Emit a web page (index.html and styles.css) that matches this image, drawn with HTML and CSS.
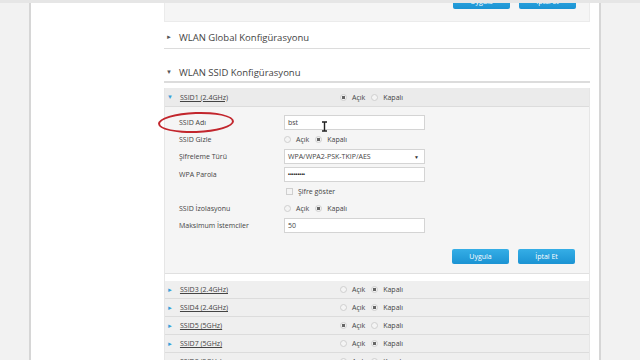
FILE: index.html
```html
<!DOCTYPE html>
<html lang="tr">
<head>
    <meta charset="UTF-8">
    <meta name="viewport" content="width=device-width, initial-scale=1.0">
    <title>WLAN Konfigürasyonu</title>
    <link rel="stylesheet" href="styles.css">
</head>
<body>
    <div class="page">
        <div class="content">
            <div class="top-box">
                <button class="btn">Uygula</button>
                <button class="btn">İptal Et</button>
            </div>

            <div class="section">
                <span class="arrow">&#9658;</span> WLAN Global Konfigürasyonu
            </div>
            <div class="section open">
                <span class="arrow">&#9660;</span> WLAN SSID Konfigürasyonu
            </div>

            <div class="ssid-panel">
                <div class="ssid-row head">
                    <span class="arrow blue">&#9660;</span>
                    <a class="ssid-name">SSID1 (2.4GHz)</a>
                    <span class="radios"><span class="radio on"></span>Açık <span class="radio"></span>Kapalı</span>
                </div>
                <div class="ssid-body">
                    <div class="form-row">
                        <label>SSID Adı</label>
                        <div class="field">bst</div>
                    </div>
                    <div class="form-row">
                        <label>SSID Gizle</label>
                        <span class="radios"><span class="radio"></span>Açık <span class="radio on"></span>Kapalı</span>
                    </div>
                    <div class="form-row">
                        <label>Şifreleme Türü</label>
                        <div class="field select">WPA/WPA2-PSK-TKIP/AES<span class="caret">&#9660;</span></div>
                    </div>
                    <div class="form-row">
                        <label>WPA Parola</label>
                        <div class="field dots">&bull;&bull;&bull;&bull;&bull;&bull;&bull;&bull;&bull;</div>
                    </div>
                    <div class="form-row">
                        <label></label>
                        <span class="check-line"><span class="checkbox"></span>Şifre göster</span>
                    </div>
                    <div class="form-row">
                        <label>SSID İzolasyonu</label>
                        <span class="radios"><span class="radio"></span>Açık <span class="radio on"></span>Kapalı</span>
                    </div>
                    <div class="form-row">
                        <label>Maksimum İstemciler</label>
                        <div class="field">50</div>
                    </div>
                    <div class="actions">
                        <button class="btn">Uygula</button>
                        <button class="btn">İptal Et</button>
                    </div>
                </div>

                <div class="ssid-row">
                    <span class="arrow blue">&#9658;</span>
                    <a class="ssid-name">SSID3 (2.4GHz)</a>
                    <span class="radios"><span class="radio"></span>Açık <span class="radio on"></span>Kapalı</span>
                </div>
                <div class="ssid-row">
                    <span class="arrow blue">&#9658;</span>
                    <a class="ssid-name">SSID4 (2.4GHz)</a>
                    <span class="radios"><span class="radio"></span>Açık <span class="radio on"></span>Kapalı</span>
                </div>
                <div class="ssid-row">
                    <span class="arrow blue">&#9658;</span>
                    <a class="ssid-name">SSID5 (5GHz)</a>
                    <span class="radios"><span class="radio on"></span>Açık <span class="radio"></span>Kapalı</span>
                </div>
                <div class="ssid-row">
                    <span class="arrow blue">&#9658;</span>
                    <a class="ssid-name">SSID7 (5GHz)</a>
                    <span class="radios"><span class="radio"></span>Açık <span class="radio on"></span>Kapalı</span>
                </div>
                <div class="ssid-row">
                    <span class="arrow blue">&#9658;</span>
                    <a class="ssid-name">SSID8 (5GHz)</a>
                    <span class="radios"><span class="radio"></span>Açık <span class="radio on"></span>Kapalı</span>
                </div>
            </div>
        </div>

        <!-- annotation drawn over the video -->
        <div class="mark"></div>
        <svg class="cursor" width="7" height="11" viewBox="0 0 7 11">
            <path d="M1 1h5M3.5 1v9M1 10h5" stroke="#222" stroke-width="1.4" fill="none"/>
        </svg>
    </div>
</body>
</html>
```

FILE: styles.css
```css
* {
    margin: 0;
    padding: 0;
    box-sizing: border-box;
    font-family: 'Open Sans', 'Noto Sans', sans-serif;
}

body {
    background: #f2f2f2;
    border-top: 3px solid #e6e6e6;
    height: 360px;
    overflow: hidden;
}

.page {
    position: relative;
    margin-left: 29px;
    width: 572px;
    height: 357px;
    background: #fff;
    border-left: 2px solid #d6d6d6;
    border-right: 2px solid #d6d6d6;
    overflow: hidden;
}

.content {
    margin-left: 133px;
    width: 426px;
}

.top-box {
    height: 19px;
    background: #f5f5f5;
    border: 1px solid #ebebeb;
    border-top: none;
    display: flex;
    justify-content: flex-end;
    align-items: flex-start;
    gap: 9px;
    padding-right: 13px;
    overflow: hidden;
}

.top-box .btn {
    margin-top: -9px;
}

.btn {
    width: 57px;
    height: 15px;
    border: none;
    border-radius: 2px;
    background: linear-gradient(#35aee6, #1b93d3);
    color: #fff;
    font-size: 7px;
}

.section {
    display: flex;
    align-items: center;
    height: 27px;
    padding: 4px 2px 0;
    border-bottom: 1px solid #dcdcdc;
    color: #444;
    font-size: 9.5px;
}

.section.open {
    height: 34px;
    padding-top: 14px;
    border-bottom: 2px solid #dcdcdc;
}

.arrow {
    font-size: 6px;
    color: #555;
    margin-right: 7px;
}

.arrow.blue {
    color: #3a9fd8;
}

.ssid-panel {
    margin-top: 5px;
    border-left: 1px solid #e6e6e6;
    border-right: 1px solid #e6e6e6;
}

.ssid-row {
    display: flex;
    align-items: center;
    height: 18px;
    padding-left: 2px;
    background: #efefef;
    border-bottom: 1px solid #dcdcdc;
    font-size: 7px;
    color: #444;
}

.ssid-row.head {
    height: 19px;
    background: #ebebeb;
}

.ssid-name {
    width: 160px;
    text-decoration: underline;
    color: #444;
}

.radios {
    display: flex;
    align-items: center;
    font-size: 7px;
    color: #444;
}

.radio {
    width: 7px;
    height: 7px;
    border-radius: 50%;
    border: 1px solid #cfcfcf;
    background: #f4f4f4;
    margin-right: 5px;
    margin-left: 6px;
}

.radio:first-child {
    margin-left: 0;
}

.radio.on {
    background: radial-gradient(circle, #666 0 1.6px, #f4f4f4 2px);
}

.ssid-body {
    background: #f5f5f5;
    padding: 6.5px 14px 9px 14px;
    border-bottom: 1px solid #e0e0e0;
    margin-bottom: 7px;
}

.form-row {
    display: flex;
    align-items: center;
    height: 17.3px;
    font-size: 7px;
    color: #444;
}

.form-row label {
    width: 105px;
}

.field {
    width: 141px;
    height: 15px;
    background: #fff;
    border: 1px solid #d4d4d4;
    padding-left: 3px;
    display: flex;
    align-items: center;
    color: #444;
}

.field.select {
    justify-content: space-between;
    padding-right: 5px;
}

.caret {
    font-size: 5px;
    color: #333;
}

.field.dots {
    font-size: 5px;
    font-weight: 700;
    letter-spacing: 0;
    color: #222;
}

.check-line {
    display: flex;
    align-items: center;
}

.checkbox {
    width: 7px;
    height: 7px;
    border: 1px solid #cfcfcf;
    background: #f4f4f4;
    margin: 0 5px 0 2px;
}

.actions {
    display: flex;
    justify-content: flex-end;
    gap: 9px;
    margin-top: 14.5px;
}

.mark {
    position: absolute;
    left: 127px;
    top: 109px;
    width: 76px;
    height: 21px;
    border: 2px solid #c2262d;
    border-radius: 50%;
    transform: rotate(-2deg);
}

.cursor {
    position: absolute;
    left: 290px;
    top: 118px;
}
```
